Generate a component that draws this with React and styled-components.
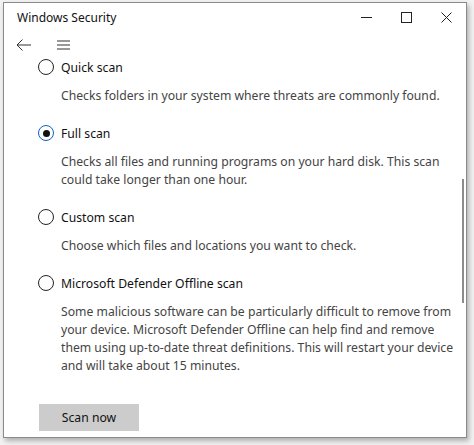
import styled, { createGlobalStyle } from "styled-components";

const GlobalStyle = createGlobalStyle`
  html, body {
    margin: 0;
    padding: 0;
    background: #f2f2f2;
  }
  body {
    font-family: "Noto Sans", "Open Sans", sans-serif;
  }
`;

const Page = styled.div`
  width: 474px;
  height: 445px;
  padding: 2px 0 0 3px;
  box-sizing: border-box;
  overflow: hidden;
`;

const Window = styled.div`
  width: 464px;
  height: 436px;
  box-sizing: border-box;
  background: #fff;
  border: 1px solid #8a8a8a;
  box-shadow: 2px 3px 5px rgba(0, 0, 0, 0.28);
  display: flex;
  flex-direction: column;
  position: relative;
  overflow: hidden;
`;

const TitleBar = styled.div`
  flex-shrink: 0;
  height: 29px;
  display: flex;
  align-items: center;
  padding-left: 13px;
`;

const Title = styled.div`
  flex: 1;
  font-size: 12px;
  color: #111;
`;

const Control = styled.div`
  width: 40px;
  height: 29px;
  display: flex;
  align-items: center;
  justify-content: center;
`;

const NavBar = styled.div`
  flex-shrink: 0;
  height: 25px;
  display: flex;
  align-items: center;
  padding-left: 10px;
  gap: 22px;
`;

const NavButton = styled.div`
  width: 18px;
  height: 18px;
  display: flex;
  align-items: center;
  justify-content: center;
`;

const Content = styled.div`
  flex: 1;
  padding: 0 0 0 34px;
  display: flex;
  flex-direction: column;
  align-items: flex-start;
`;

const Option = styled.div`
  display: flex;
  flex-direction: column;
  margin-bottom: ${(p) => p.$gap}px;
`;

const OptionRow = styled.label`
  display: flex;
  align-items: center;
  height: 20px;
  gap: 7px;
  font-size: 12.2px;
  color: #111;
`;

const Radio = styled.span`
  width: 16px;
  height: 16px;
  box-sizing: border-box;
  border-radius: 50%;
  border: 1.6px solid ${(p) => (p.$checked ? "#0a64c8" : "#222")};
  display: flex;
  align-items: center;
  justify-content: center;
  flex-shrink: 0;

  &::after {
    content: "";
    width: 7px;
    height: 7px;
    border-radius: 50%;
    background: #111;
    display: ${(p) => (p.$checked ? "block" : "none")};
  }
`;

const Description = styled.div`
  margin: 10px 0 0 23px;
  font-size: 12.2px;
  line-height: 18px;
  color: #444;
  white-space: nowrap;
`;

const ScanButton = styled.button`
  margin: 0 0 0 1px;
  width: 100px;
  height: 27px;
  border: none;
  background: #cccccc;
  font-family: inherit;
  font-size: 12.2px;
  color: #111;
  padding: 0;
`;

const Scrollbar = styled.div`
  position: absolute;
  right: 2px;
  top: 176px;
  width: 2px;
  height: 124px;
  background: #8c8c8c;
`;

const options = [
  {
    label: "Quick scan",
    lines: ["Checks folders in your system where threats are commonly found."],
    gap: 18,
  },
  {
    label: "Full scan",
    checked: true,
    lines: [
      "Checks all files and running programs on your hard disk. This scan",
      "could take longer than one hour.",
    ],
    gap: 18,
  },
  {
    label: "Custom scan",
    lines: ["Choose which files and locations you want to check."],
    gap: 18,
  },
  {
    label: "Microsoft Defender Offline scan",
    lines: [
      "Some malicious software can be particularly difficult to remove from",
      "your device. Microsoft Defender Offline can help find and remove",
      "them using up-to-date threat definitions. This will restart your device",
      "and will take about 15 minutes.",
    ],
    gap: 29,
  },
];

export default function App() {
  return (
    <Page>
      <GlobalStyle />
      <Window>
        <TitleBar>
          <Title>Windows Security</Title>
          <Control>
            <svg width="11" height="11" viewBox="0 0 11 11">
              <path d="M0 5.5h11" stroke="#222" strokeWidth="1" />
            </svg>
          </Control>
          <Control>
            <svg width="11" height="11" viewBox="0 0 11 11">
              <rect x="0.5" y="0.5" width="10" height="10" fill="none" stroke="#222" strokeWidth="1" />
            </svg>
          </Control>
          <Control>
            <svg width="11" height="11" viewBox="0 0 11 11">
              <path d="M0.5 0.5l10 10M10.5 0.5l-10 10" stroke="#222" strokeWidth="1" />
            </svg>
          </Control>
        </TitleBar>
        <NavBar>
          <NavButton>
            <svg width="15" height="12" viewBox="0 0 15 12">
              <path d="M15 6H1M6.5 0.5L1 6l5.5 5.5" fill="none" stroke="#333" strokeWidth="1" />
            </svg>
          </NavButton>
          <NavButton>
            <svg width="13" height="10" viewBox="0 0 13 10">
              <path d="M0 1h13M0 5h13M0 9h13" stroke="#333" strokeWidth="1.1" />
            </svg>
          </NavButton>
        </NavBar>
        <Content>
          {options.map((o) => (
            <Option key={o.label} $gap={o.gap}>
              <OptionRow>
                <Radio $checked={o.checked} />
                {o.label}
              </OptionRow>
              <Description>
                {o.lines.map((line, i) => (
                  <div key={i}>{line}</div>
                ))}
              </Description>
            </Option>
          ))}
          <ScanButton>Scan now</ScanButton>
        </Content>
        <Scrollbar />
      </Window>
    </Page>
  );
}
